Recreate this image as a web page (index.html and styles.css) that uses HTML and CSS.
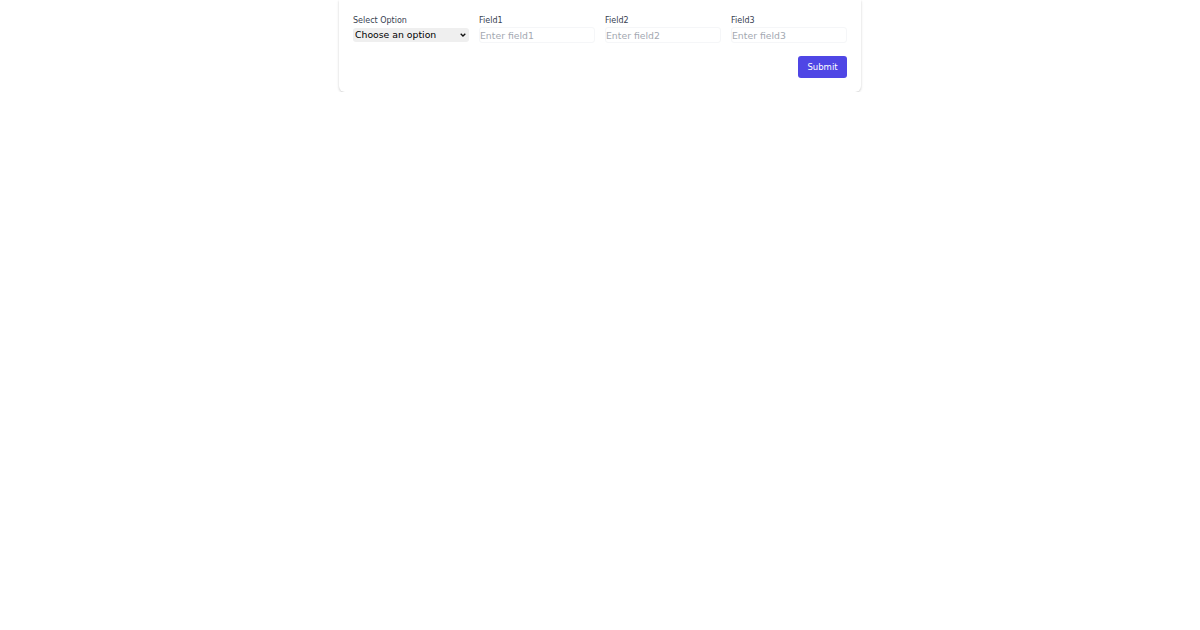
FILE: index.html
```html
<!DOCTYPE html>
<html>
<head>
<meta charset="utf-8">
<link rel="stylesheet" href="styles.css">
</head>
<body>
<div class="card">
  <form class="form">
    <div class="row">
      <div class="field">
        <label class="label">Select Option</label>
        <div class="select-wrap">
          <select class="select">
            <option>Choose an option</option>
          </select>
          <svg class="chev" width="6" height="4" viewBox="0 0 6 4"><path d="M0.7 0.7 L3 3 L5.3 0.7" fill="none" stroke="#111" stroke-width="1.3"/></svg>
        </div>
      </div>
      <div class="field">
        <label class="label">Field1</label>
        <input class="input" type="text" placeholder="Enter field1">
      </div>
      <div class="field">
        <label class="label">Field2</label>
        <input class="input" type="text" placeholder="Enter field2">
      </div>
      <div class="field">
        <label class="label">Field3</label>
        <input class="input" type="text" placeholder="Enter field3">
      </div>
    </div>
    <div class="actions">
      <button class="btn" type="button">Submit</button>
    </div>
  </form>
</div>
</body>
</html>
```
FILE: styles.css
```css
html, body {
  margin: 0;
  padding: 0;
  background: #ffffff;
  font-family: "DejaVu Sans", sans-serif;
}
.card {
  width: 494px;
  margin: 0 auto;
  padding: 15px 14px 14px;
  background: #ffffff;
  border-radius: 0 0 6px 6px;
  box-shadow: 0 1px 3px rgba(0,0,0,0.14), 0 1px 2px rgba(0,0,0,0.07);
}
.row {
  display: grid;
  grid-template-columns: repeat(4, minmax(0, 1fr));
  column-gap: 10px;
}
.field {
  display: flex;
  flex-direction: column;
  min-width: 0;
}
.label {
  font-size: 8px;
  line-height: 12px;
  color: #374151;
  margin-bottom: 1px;
}
.select-wrap {
  position: relative;
  display: flex;
}
.select {
  appearance: none;
  -webkit-appearance: none;
  width: 100%;
  font-family: "DejaVu Sans", sans-serif;
  font-size: 9.3px;
  height: 14px;
  line-height: 14px;
  margin: 0;
  padding: 0 0 0 2px;
  border: none;
  border-radius: 3px;
  background: #efefef;
  color: #000000;
}
.chev {
  position: absolute;
  right: 3px;
  top: 5px;
  pointer-events: none;
}
.input {
  width: 100%;
  box-sizing: border-box;
  font-family: "DejaVu Sans", sans-serif;
  font-size: 9.3px;
  height: 16px;
  margin: -1px 0 0 0;
  padding: 0 0 0 0;
  border: 1px solid #f5f6f8;
  border-radius: 3px;
  color: #111827;
  background: #ffffff;
  outline: none;
}
.input::placeholder {
  color: #a3a8b1;
}
.actions {
  display: flex;
  justify-content: flex-end;
  margin-top: 13px;
}
.btn {
  font-family: "DejaVu Sans", sans-serif;
  font-size: 8.5px;
  color: #ffffff;
  background: #4f46e5;
  border: none;
  border-radius: 3px;
  width: 49px;
  height: 22px;
  padding: 0;
}
```
